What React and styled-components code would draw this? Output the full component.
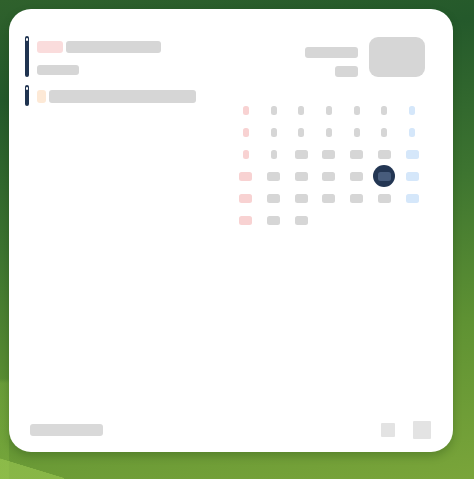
import React from "react";
import styled, { createGlobalStyle } from "styled-components";

const Global = createGlobalStyle`
  html, body { margin: 0; padding: 0; }
  body {
    font-family: "Inter", "Liberation Sans", sans-serif;
    background:
      linear-gradient(197deg, transparent 0 50%, rgba(160, 205, 85, 0.55) 51% 100%) left bottom / 64px 22px no-repeat,
      linear-gradient(180deg, transparent 0 79%, rgba(140, 190, 70, 0.3) 80% 100%) left top / 9px 100% no-repeat,
      linear-gradient(170deg, #2f612c 0%, #24592b 18%, #3d7430 45%, #5f9233 72%, #7aa53a 100%);
    min-height: 100vh;
  }
`;

const Page = styled.div`
  box-sizing: border-box;
  width: 474px;
  height: 479px;
  padding: 9px 21px 27px 9px;
`;

const Card = styled.div`
  box-sizing: border-box;
  width: 444px;
  height: 443px;
  background: #ffffff;
  border-radius: 22px;
  box-shadow: 0 4px 8px rgba(20, 50, 10, 0.25);
  display: flex;
  flex-direction: column;
  padding: 27px 22px 13px 16px;
`;

const Body = styled.div`
  flex: 1;
  display: flex;
  justify-content: space-between;
  align-items: flex-start;
  padding-right: 5px;
`;

const EventList = styled.div`
  display: flex;
  flex-direction: column;
  gap: 8px;
`;

const Event = styled.div`
  display: flex;
  gap: 8px;
`;

const Accent = styled.div`
  width: 4px;
  border-radius: 2px;
  background: #1f3350;
  position: relative;
  &::before {
    content: "";
    position: absolute;
    top: 2px;
    left: 1px;
    width: 2px;
    height: 3px;
    border-radius: 1px;
    background: #ffffff;
  }
`;

const EventContent = styled.div`
  display: flex;
  flex-direction: column;
  gap: 12px;
  padding: ${(p) => p.$pad};
`;

const Line = styled.div`
  display: flex;
  gap: 3px;
`;

const Block = styled.div`
  width: ${(p) => p.$w}px;
  height: ${(p) => p.$h}px;
  border-radius: 3px;
  background: ${(p) => p.$c || "#d6d6d6"};
`;

const RightCol = styled.div`
  width: 194px;
  display: flex;
  flex-direction: column;
  gap: 22px;
  padding-top: 1px;
`;

const Header = styled.div`
  display: flex;
  justify-content: flex-end;
  gap: 11px;
  padding-right: 1px;
`;

const DateText = styled.div`
  display: flex;
  flex-direction: column;
  align-items: flex-end;
  gap: 8px;
  padding-top: 10px;
`;

const Thumb = styled.div`
  width: 56px;
  height: 40px;
  border-radius: 9px;
  background: #d6d6d6;
`;

const Grid = styled.div`
  display: grid;
  grid-template-columns: repeat(7, 1fr);
  grid-auto-rows: 22px;
`;

const Cell = styled.div`
  display: flex;
  align-items: center;
  justify-content: center;
`;

const Day = styled.div`
  width: ${(p) => (p.$wide ? 13 : 6)}px;
  height: 9px;
  border-radius: 2.5px;
  background: ${(p) => p.$c};
`;

const Selected = styled.div`
  width: 22px;
  height: 22px;
  border-radius: 50%;
  background: #233653;
  display: flex;
  align-items: center;
  justify-content: center;
`;

const Footer = styled.div`
  display: flex;
  align-items: center;
  padding-left: 5px;
`;

const FooterLabel = styled.div`
  width: 73px;
  height: 12px;
  border-radius: 3px;
  background: #d9d9d9;
  margin-right: auto;
`;

const Square = styled.div`
  width: ${(p) => p.$s}px;
  height: ${(p) => p.$s}px;
  background: #e3e3e3;
  border-radius: 1px;
`;

const Squares = styled.div`
  display: flex;
  align-items: center;
  gap: 18px;
`;

const PINK = "#f8d2d2";
const GRAY = "#d6d6d6";
const BLUE = "#d5e7fa";

// n = narrow, w = wide, s = selected
const rows = [
  ["n", "n", "n", "n", "n", "n", "n"],
  ["n", "n", "n", "n", "n", "n", "n"],
  ["n", "n", "w", "w", "w", "w", "w"],
  ["w", "w", "w", "w", "w", "s", "w"],
  ["w", "w", "w", "w", "w", "w", "w"],
  ["w", "w", "w"],
];

function colorFor(col) {
  if (col === 0) return PINK;
  if (col === 6) return BLUE;
  return GRAY;
}

export default function App() {
  return (
    <>
      <Global />
      <Page>
        <Card>
          <Body>
            <EventList>
              <Event>
                <Accent />
                <EventContent $pad="5px 0 2px">
                  <Line>
                    <Block $w={26} $h={12} $c="#fadcdc" />
                    <Block $w={95} $h={12} />
                  </Line>
                  <Line>
                    <Block $w={42} $h={10} />
                  </Line>
                </EventContent>
              </Event>
              <Event>
                <Accent />
                <EventContent $pad="5px 0 3px">
                  <Line>
                    <Block $w={9} $h={13} $c="#fde9d6" />
                    <Block $w={147} $h={13} />
                  </Line>
                </EventContent>
              </Event>
            </EventList>
            <RightCol>
              <Header>
                <DateText>
                  <Block $w={53} $h={11} />
                  <Block $w={23} $h={11} />
                </DateText>
                <Thumb />
              </Header>
              <Grid>
                {rows.map((row, r) =>
                  row.map((k, c) => (
                    <Cell key={`${r}-${c}`}>
                      {k === "s" ? (
                        <Selected>
                          <Day $wide $c="#475c7c" />
                        </Selected>
                      ) : (
                        <Day $wide={k === "w"} $c={colorFor(c)} />
                      )}
                    </Cell>
                  ))
                )}
              </Grid>
            </RightCol>
          </Body>
          <Footer>
            <FooterLabel />
            <Squares>
              <Square $s={14} />
              <Square $s={18} />
            </Squares>
          </Footer>
        </Card>
      </Page>
    </>
  );
}
